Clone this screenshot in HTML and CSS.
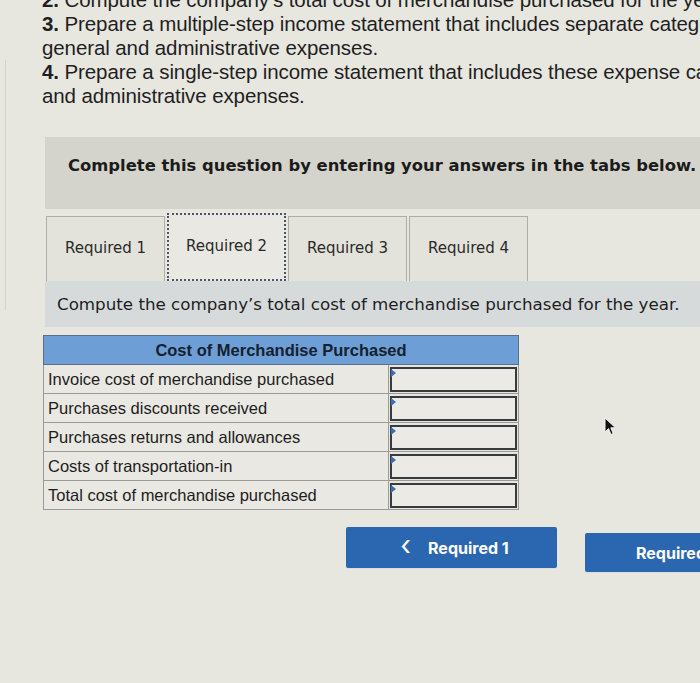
FILE: index.html
```html
<!DOCTYPE html>
<html>
<head>
<meta charset="utf-8">
<link rel="stylesheet" href="styles.css">
</head>
<body>
<div class="page">
  <div class="edge"></div>
  <div class="intro">
    <p><b>2.</b> Compute the company’s total cost of merchandise purchased for the year.</p>
    <p><b>3.</b> Prepare a multiple-step income statement that includes separate categories for selling expenses and for</p>
    <p>general and administrative expenses.</p>
    <p><b>4.</b> Prepare a single-step income statement that includes these expense categories: selling expenses, general</p>
    <p>and administrative expenses.</p>
  </div>

  <div class="band">Complete this question by entering your answers in the tabs below.</div>

  <div class="tabs">
    <div class="tab">Required 1</div>
    <div class="tab active">Required 2</div>
    <div class="tab">Required 3</div>
    <div class="tab">Required 4</div>
  </div>

  <div class="panel">Compute the company’s total cost of merchandise purchased for the year.</div>

  <table class="grid">
    <thead>
      <tr><th colspan="2">Cost of Merchandise Purchased</th></tr>
    </thead>
    <tbody>
      <tr><td class="lbl">Invoice cost of merchandise purchased</td><td class="inp"><span class="box"></span></td></tr>
      <tr><td class="lbl">Purchases discounts received</td><td class="inp"><span class="box"></span></td></tr>
      <tr><td class="lbl">Purchases returns and allowances</td><td class="inp"><span class="box"></span></td></tr>
      <tr><td class="lbl">Costs of transportation-in</td><td class="inp"><span class="box"></span></td></tr>
      <tr><td class="lbl">Total cost of merchandise purchased</td><td class="inp"><span class="box"></span></td></tr>
    </tbody>
  </table>

  <div class="nav">
    <button class="btn prev"><span class="chev">&lsaquo;</span>Required 1</button>
    <button class="btn next">Required 3<span class="chev">&rsaquo;</span></button>
  </div>

  <svg class="cursor" width="14" height="20" viewBox="0 0 14 20">
    <path d="M1 1 L1 15 L4.5 11.5 L7 17.5 L9.2 16.5 L6.8 10.8 L11.5 10.8 Z" fill="#111" stroke="#f2f2f2" stroke-width="1"/>
  </svg>
</div>
</body>
</html>
```

FILE: styles.css
```css
html, body {
  margin: 0;
  padding: 0;
  width: 700px;
  height: 683px;
  overflow: hidden;
  background: #e7e6df;
}

.page {
  position: relative;
  width: 700px;
  height: 683px;
  overflow: hidden;
}

.edge {
  position: absolute;
  left: 5px;
  top: 60px;
  width: 1px;
  height: 250px;
  background: #d3d2cb;
}

.intro {
  margin-top: -12px;
  padding-left: 42px;
  font-family: "Liberation Sans", Arial, sans-serif;
  font-size: 20.5px;
  line-height: 24px;
  color: #1f1f1f;
  white-space: nowrap;
  letter-spacing: -0.1px;
}

.intro p {
  margin: 0;
}

.intro b {
  font-weight: bold;
}

.band {
  margin: 29px 0 0 45px;
  height: 72px;
  background: #d5d4cc;
  box-sizing: border-box;
  padding: 18px 0 0 23px;
  font-family: "DejaVu Sans", Verdana, sans-serif;
  font-weight: bold;
  font-size: 16.4px;
  line-height: 22px;
  color: #1b1b1b;
  white-space: nowrap;
}

.tabs {
  display: flex;
  margin: 4px 0 0 46px;
  height: 68px;
  align-items: flex-end;
}

.tab {
  width: 119px;
  height: 65px;
  box-sizing: border-box;
  border: 1px solid #aeada6;
  border-bottom: none;
  background: #e3e2db;
  display: flex;
  align-items: center;
  justify-content: center;
  font-family: "DejaVu Sans", Verdana, sans-serif;
  font-size: 15px;
  color: #2a2a2a;
  margin-right: 2px;
  padding-bottom: 2px;
}

.tab.active {
  height: 68px;
  border: 2px dotted #4a5566;
  background: #e9e8e2;
}

.panel {
  margin: 0 0 0 45px;
  height: 46px;
  background: #d6dadb;
  box-sizing: border-box;
  padding: 12px 0 0 12px;
  font-family: "DejaVu Sans", Verdana, sans-serif;
  font-size: 16.7px;
  line-height: 22px;
  color: #1e1e1e;
  white-space: nowrap;
}

.grid {
  margin: 8px 0 0 43px;
  width: 476px;
  border-collapse: collapse;
  font-family: "Liberation Sans", Arial, sans-serif;
}

.grid th {
  background: #6d9fd6;
  height: 28px;
  padding: 0;
  font-size: 16.5px;
  font-weight: bold;
  color: #16202e;
  border: 1px solid #5a6f88;
  text-align: center;
}

.grid td {
  height: 27px;
  padding: 0;
  border: 1px solid #9a9a96;
}

.grid td.lbl {
  width: 340px;
  padding-left: 4px;
  font-size: 16.5px;
  color: #1d1d1d;
  background: #e9e8e2;
}

.grid td.inp {
  padding: 1px 1px 0 1px;
  background: #e6e5de;
}

.box {
  position: relative;
  display: block;
  height: 25px;
  border: 2px solid #383a42;
  background: #ebeae4;
  box-sizing: border-box;
}

.box::before {
  content: "";
  position: absolute;
  left: -1px;
  top: 0;
  border-left: 5px solid #3c6db0;
  border-top: 4px solid transparent;
  border-bottom: 4px solid transparent;
}

.nav {
  display: flex;
  margin: 17px 0 0 346px;
  gap: 28px;
}

.btn {
  flex-shrink: 0;
  height: 41px;
  border: none;
  border-radius: 2px;
  background: #2b67b1;
  color: #ffffff;
  font-family: Inter, Roboto, "Liberation Sans", sans-serif;
  font-weight: bold;
  font-size: 16px;
  display: flex;
  align-items: center;
  padding: 0;
  box-shadow: 0 1px 0 #d9dde6;
}

.btn.prev {
  width: 211px;
  justify-content: center;
  padding-left: 6px;
}

.btn.prev .chev {
  font-size: 28px;
  font-weight: normal;
  margin-right: 17px;
  margin-top: -5px;
}

.btn.next {
  width: 200px;
  margin-top: 6px;
  height: 39px;
  padding-left: 51px;
  justify-content: flex-start;
}

.btn.next .chev {
  font-size: 28px;
  font-weight: normal;
  margin-left: 14px;
  margin-top: -5px;
}

.cursor {
  position: absolute;
  left: 604px;
  top: 417px;
}
```
